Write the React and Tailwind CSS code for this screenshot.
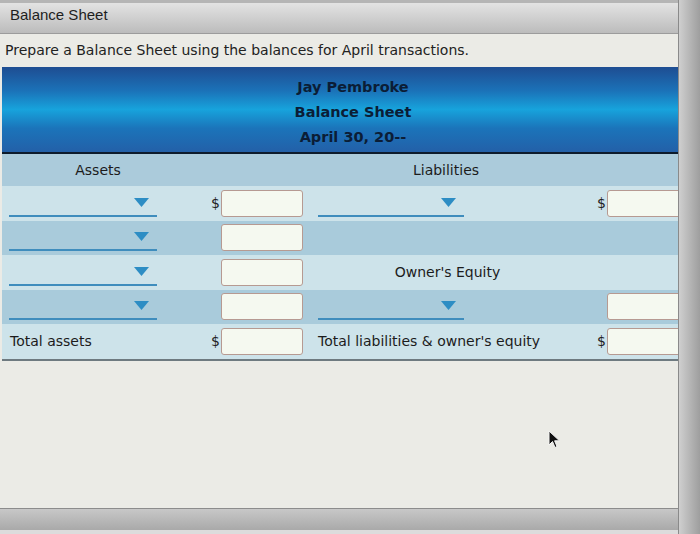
import React from 'react'

function Dropdown({ width = 'w-[148px]' }) {
  return (
    <div className={`relative h-[27px] ${width} border-b-2 border-[#3f8dbd]`}>
      <svg className="absolute right-[8px] top-[8px]" width="15" height="9" viewBox="0 0 15 9">
        <polygon points="0,0 15,0 7.5,9" fill="#2d8dc4" />
      </svg>
    </div>
  )
}

function Amount({ dollar, w = 'w-[16px]' }) {
  return (
    <div className="flex items-center shrink-0">
      <span className={`${w} shrink-0 text-right pr-[1px] text-[14px] text-[#222]`}>{dollar ? '$' : ''}</span>
      <div className="w-[82px] h-[27px] shrink-0 rounded-[3px] border border-[#b69a92] bg-[#f5f9f0]" />
    </div>
  )
}

function Row({ shade, left, right, rightAmount, rightDollar, leftDollar }) {
  const bg = shade === 'dark' ? 'bg-[#a9cbdb]' : 'bg-[#cde3ea]'
  return (
    <div className={`flex items-center h-[34.5px] ${bg}`}>
      <div className="w-[203px] shrink-0 pl-[7px]">{left}</div>
      <Amount dollar={leftDollar} />
      <div className="w-[15px] shrink-0" />
      <div className="w-[263px] shrink-0">{right}</div>
      {rightAmount ? <Amount dollar={rightDollar} w="w-[26px]" /> : null}
    </div>
  )
}

export default function App() {
  return (
    <div className="relative w-[700px] h-[534px] overflow-hidden bg-[#9a9a9a] font-['DejaVu_Sans',sans-serif] text-[#1c1c1c]">
      <div className="flex h-full">
        <div className="w-[679px] shrink-0 flex flex-col bg-[#ebebe6] border-r border-[#8a8a8a]">
          <div className="h-[3px] bg-[#b5b5b5]" />
          <div className="h-[31px] flex items-center pl-[10px] pb-[5px] bg-gradient-to-b from-[#e3e3e3] to-[#bcbcbc] border-b border-[#9c9c9c] font-['Liberation_Sans',sans-serif] text-[15px] text-[#1e1e1e]">
            Balance Sheet
          </div>
          <div className="h-[33px] flex items-center pl-[5px] text-[14px] text-[#222]">
            Prepare a Balance Sheet using the balances for April transactions.
          </div>
          <div className="ml-[2px] overflow-hidden">
            <div className="h-[87px] flex flex-col items-center justify-center gap-[5px] pl-[26px] pt-[4px] bg-[linear-gradient(180deg,#1e4d92_0%,#1b72b8_28%,#17a3dc_50%,#1b74ba_72%,#2360a8_100%)] border-b-2 border-[#0d1b2c] font-bold text-[14.5px] text-[#0b1d36] leading-[20px]">
              <div>Jay Pembroke</div>
              <div>Balance Sheet</div>
              <div>April 30, 20--</div>
            </div>
            <div className="flex items-center h-[32px] bg-[#abcbdb] text-[14px]">
              <div className="w-[192px] shrink-0 text-center">Assets</div>
              <div className="w-[123px] shrink-0" />
              <div className="w-[258px] shrink-0 text-center">Liabilities</div>
            </div>
            <Row
              shade="light"
              left={<Dropdown />}
              leftDollar
              right={<Dropdown width="w-[146px]" />}
              rightAmount
              rightDollar
            />
            <Row shade="dark" left={<Dropdown />} />
            <Row
              shade="light"
              left={<Dropdown />}
              right={<div className="text-center text-[14px] pr-[4px]">Owner's Equity</div>}
            />
            <Row shade="dark" left={<Dropdown />} right={<Dropdown width="w-[146px]" />} rightAmount />
            <Row
              shade="light"
              left={<span className="text-[14px] pl-[1px]">Total assets</span>}
              leftDollar
              right={<span className="text-[14px]">Total liabilities &amp; owner's equity</span>}
              rightAmount
              rightDollar
            />
            <div className="h-[2px] bg-[#6e7a80]" />
          </div>
          <div className="flex-1" />
          <div className="h-[22px] bg-gradient-to-b from-[#c8c8c8] to-[#a9a9a9] border-t border-[#8c8c8c]" />
          <div className="h-[4px] bg-[#dcdcdc]" />
        </div>
        <div className="flex-1 bg-gradient-to-r from-[#cfcfcf] to-[#9e9e9e]" />
      </div>
      <svg className="absolute left-[548px] top-[430px]" width="14" height="20" viewBox="0 0 14 20">
        <path d="M1 1 L1 15 L4.5 11.5 L7 17.5 L9 16.5 L6.6 10.8 L11.5 10.8 Z" fill="#111" stroke="#f4f4f4" strokeWidth="1" />
      </svg>
    </div>
  )
}
